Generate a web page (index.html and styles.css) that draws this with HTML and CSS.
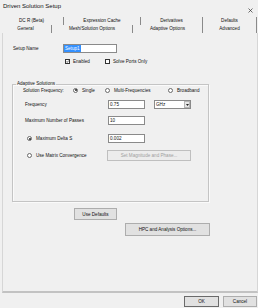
FILE: index.html
```html
<!DOCTYPE html>
<html>
<head>
<meta charset="utf-8">
<link rel="stylesheet" href="styles.css">
</head>
<body>
<div class="dialog">
  <div class="titlebar">
    <span class="title">Driven Solution Setup</span>
    <svg class="close" width="5" height="5" viewBox="0 0 5 5"><path d="M0.5 0.5L4.5 4.5M4.5 0.5L0.5 4.5" stroke="#333" stroke-width="0.7"/></svg>
  </div>
  <div class="tabrow row1">
    <div class="tab">DC R (Beta)</div>
    <div class="tab">Expression Cache</div>
    <div class="tab">Derivatives</div>
    <div class="tab">Defaults</div>
  </div>
  <div class="tabrow row2">
    <div class="tab">General</div>
    <div class="tab">Mesh/Solution Options</div>
    <div class="tab">Adaptive Options</div>
    <div class="tab">Advanced</div>
  </div>
  <div class="panel">
    <div class="setup-row">
      <span class="setup-label">Setup Name</span>
      <span class="textbox setup-box"><span class="selected">Setup1</span></span>
    </div>
    <div class="check-row">
      <span class="check-item enabled"><span class="checkbox"><svg width="3" height="3" viewBox="0 0 3 3"><path d="M0.3 1.5L1.2 2.4L2.8 0.5" fill="none" stroke="#222" stroke-width="0.7"/></svg></span>Enabled</span>
      <span class="check-item"><span class="checkbox"></span>Solve Ports Only</span>
    </div>
    <fieldset class="group">
      <legend class="legend">Adaptive Solutions</legend>
      <div class="freq-row">
        <span class="freq-label">Solution Frequency:</span>
        <span class="radio-item single"><span class="radio checked"></span>Single</span>
        <span class="radio-item multi"><span class="radio"></span>Multi-Frequencies</span>
        <span class="radio-item"><span class="radio"></span>Broadband</span>
      </div>
      <div class="field-row r-frequency">
        <span class="field-label">Frequency</span>
        <span class="textbox field-box">0.75</span>
        <span class="select"><span class="select-text">GHz</span><span class="select-btn"><svg width="3" height="2" viewBox="0 0 3 2"><path d="M0 0H3L1.5 2Z" fill="#222"/></svg></span></span>
      </div>
      <div class="field-row r-passes">
        <span class="field-label">Maximum Number of Passes</span>
        <span class="textbox field-box">10</span>
      </div>
      <div class="field-row r-delta">
        <span class="radio-label"><span class="radio checked"></span>Maximum Delta S</span>
        <span class="textbox field-box">0.002</span>
      </div>
      <div class="field-row r-matrix">
        <span class="radio-label matrix-label"><span class="radio"></span>Use Matrix Convergence</span>
        <span class="button disabled matrix-btn">Set Magnitude and Phase...</span>
      </div>
    </fieldset>
    <div class="btn-row defaults-row"><span class="button defaults-btn">Use Defaults</span></div>
    <div class="btn-row hpc-row"><span class="button hpc-btn">HPC and Analysis Options...</span></div>
  </div>
  <div class="footer">
    <span class="button default ok-btn">OK</span>
    <span class="button cancel-btn">Cancel</span>
  </div>
</div>
</body>
</html>
```
FILE: styles.css
```css
* { box-sizing: border-box; }
html, body { margin: 0; padding: 0; }
body {
  width: 258px;
  height: 308px;
  overflow: hidden;
  background: #f0f0f0;
  font-family: "Liberation Sans", Arial, sans-serif;
  font-size: 4.6px;
  color: #111;
}
.dialog { width: 258px; height: 308px; }
.titlebar {
  height: 17px;
  display: flex;
  align-items: flex-start;
  padding-left: 3px;
}
.title { font-size: 6px; line-height: 12px; color: #111; }
.close { margin-left: auto; margin-right: 5px; margin-top: 8px; }

.tabrow { display: grid; height: 8px; }
.row1 { grid-template-columns: 64px 77px 62px 54px; }
.row2 { grid-template-columns: 52px 81px 70px 54px; }
.tab {
  text-align: center;
  line-height: 8px;
  white-space: nowrap;
  border-right: 1px solid #8a8a8a;
}

.panel {
  display: flow-root;
  margin-left: 2px;
  width: 256px;
  height: 260px;
  padding-top: 11px;
  border-left: 1px solid #d6d6d6;
  border-right: 1px solid #d6d6d6;
  border-bottom: 2px solid #c2c2c2;
}
.setup-row {
  display: flex;
  align-items: center;
  padding-left: 10px;
  height: 9px;
}
.setup-label { width: 50px; }
.textbox {
  display: flex;
  align-items: center;
  background: #fff;
  border: 1px solid #8a8a8a;
  white-space: nowrap;
}
.setup-box { width: 54px; height: 9px; }
.selected {
  background: #3390ff;
  color: #fff;
  line-height: 7px;
  padding: 0 1px;
}
.check-row {
  display: flex;
  align-items: center;
  height: 5px;
  margin-top: 6px;
  padding-left: 62px;
}
.check-item { display: flex; align-items: center; white-space: nowrap; }
.check-item.enabled { width: 40px; }
.checkbox {
  width: 5px;
  height: 5px;
  border: 1px solid #333;
  background: #fff;
  margin-right: 3px;
  display: flex;
  align-items: center;
  justify-content: center;
}

.group {
  margin: 17px 0 0 9px;
  padding: 0;
  width: 197px;
  height: 121px;
  border: 1px solid #c4c4c4;
  box-shadow: inset 1px 1px 0 #fafafa, 1px 1px 0 #fafafa;
  min-width: 0;
}
.legend {
  padding: 0 1px;
  margin-left: 3px;
  line-height: 6px;
  white-space: nowrap;
}
.freq-row {
  display: flex;
  align-items: center;
  height: 6px;
  padding-left: 10px;
}
.freq-label { width: 50px; white-space: nowrap; }
.radio-item { display: flex; align-items: center; white-space: nowrap; }
.radio-item.single { width: 32px; }
.radio-item.multi { width: 63px; }
.radio {
  width: 5px;
  height: 5px;
  border-radius: 50%;
  border: 1px solid #6a6a6a;
  background: #fff;
  margin-right: 4px;
  flex: none;
  display: flex;
  align-items: center;
  justify-content: center;
}
.radio.checked::after {
  content: "";
  width: 2px;
  height: 2px;
  border-radius: 50%;
  background: #222;
}
.field-row {
  display: flex;
  align-items: center;
  padding-left: 12px;
}
.r-frequency { margin-top: 7px; height: 9px; }
.r-passes { margin-top: 7px; height: 9px; }
.r-delta { margin-top: 9px; height: 9px; padding-left: 14px; }
.r-matrix { margin-top: 7px; height: 11px; padding-left: 14px; }
.field-label { width: 83px; white-space: nowrap; }
.radio-label { width: 81px; display: flex; align-items: center; white-space: nowrap; }
.matrix-label { width: 80px; }
.field-box { width: 37px; height: 9px; padding-left: 1px; }
.select {
  margin-left: 9px;
  width: 37px;
  height: 9px;
  background: #fff;
  border: 1px solid #8a8a8a;
  display: flex;
  align-items: center;
  justify-content: space-between;
}
.select-text { padding-left: 1px; }
.select-btn {
  width: 6px;
  height: 7px;
  background: #e6e6e6;
  border: 1px solid #b5b5b5;
  display: flex;
  align-items: center;
  justify-content: center;
}

.button {
  display: flex;
  align-items: center;
  justify-content: center;
  background: #e1e1e1;
  border: 1px solid #adadad;
  white-space: nowrap;
}
.button.disabled { color: #a0a0a0; background: #ececec; border-color: #bfbfbf; }
.button.default { border: 1px solid #6a6a6a; }
.matrix-btn { width: 84px; height: 11px; }
.btn-row { display: flex; }
.defaults-row { margin-top: 6px; padding-left: 71px; }
.defaults-btn { width: 43px; height: 12px; }
.hpc-row { margin-top: 3px; padding-left: 122px; }
.hpc-btn { width: 85px; height: 13px; }

.footer {
  display: flex;
  justify-content: flex-end;
  gap: 4px;
  margin-top: 3px;
  padding-right: 1px;
}
.ok-btn { width: 35px; height: 11px; }
.cancel-btn { width: 34px; height: 11px; }
```
